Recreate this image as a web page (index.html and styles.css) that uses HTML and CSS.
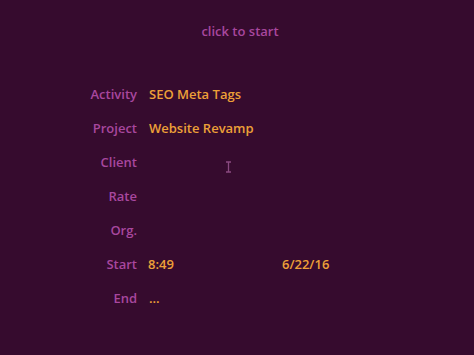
FILE: index.html
```html
<!DOCTYPE html>
<html>
<head>
<meta charset="utf-8">
<link rel="stylesheet" href="styles.css">
</head>
<body>
<div class="page">
  <div class="start">click to start</div>
  <div class="form">
    <div class="row"><span class="label">Activity</span><span class="value">SEO Meta Tags</span></div>
    <div class="row"><span class="label">Project</span><span class="value">Website Revamp</span></div>
    <div class="row"><span class="label">Client</span><span class="value"></span></div>
    <div class="row"><span class="label">Rate</span><span class="value"></span></div>
    <div class="row"><span class="label">Org.</span><span class="value"></span></div>
    <div class="row"><span class="label">Start</span><span class="value time">8:49</span><span class="date">6/22/16</span></div>
    <div class="row"><span class="label">End</span><span class="value">...</span></div>
  </div>
  <svg class="cursor" width="7" height="12" viewBox="0 0 7 12"><path d="M1 1h5M3.5 1v10M1 11h5" stroke="#8a4a80" stroke-width="1.3" fill="none"/></svg>
</div>
</body>
</html>
```
FILE: styles.css
```css
html, body { margin: 0; padding: 0; }
body {
  background: #360b2e;
  width: 474px;
  height: 355px;
  overflow: hidden;
  font-family: "Open Sans", "DejaVu Sans", sans-serif;
  font-weight: 600;
  font-size: 13px;
}
.page { position: relative; width: 474px; height: 355px; }
.start {
  text-align: center;
  color: #a8479e;
  padding-top: 22px;
  height: 18px;
  line-height: 18px;
  margin-left: 6px;
}
.form { padding-top: 37px; }
.row {
  display: flex;
  align-items: center;
  height: 34px;
}
.label {
  width: 137px;
  text-align: right;
  color: #a8479e;
}
.value {
  margin-left: 12px;
  color: #eda038;
  width: 134px;
}
.time { margin-left: 11px; }
.date { color: #eda038; }
.cursor { position: absolute; left: 225px; top: 161px; }
```
